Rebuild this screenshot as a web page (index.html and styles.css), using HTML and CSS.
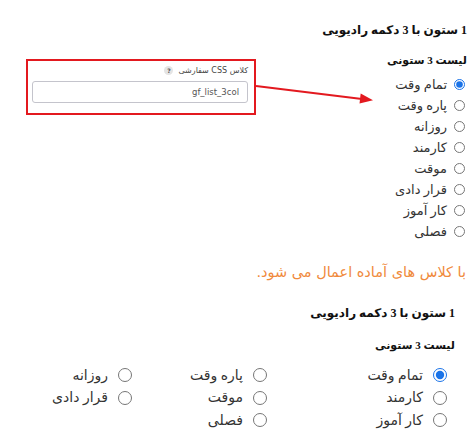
FILE: index.html
```html
<!DOCTYPE html>
<html lang="fa" dir="rtl">
<head>
<meta charset="utf-8">
<title>لیست 3 ستونی</title>
<link rel="stylesheet" href="styles.css">
</head>
<body>
<main class="page">
  <section class="demo">
    <div class="field field-top">
      <h2 class="field-title">1 ستون با 3 دکمه رادیویی</h2>
      <h3 class="list-title">لیست 3 ستونی</h3>
      <ul class="radios radios-single">
        <li><input type="radio" name="a" checked><span>تمام وقت</span></li>
        <li><input type="radio" name="a"><span>پاره وقت</span></li>
        <li><input type="radio" name="a"><span>روزانه</span></li>
        <li><input type="radio" name="a"><span>کارمند</span></li>
        <li><input type="radio" name="a"><span>موقت</span></li>
        <li><input type="radio" name="a"><span>قرار دادی</span></li>
        <li><input type="radio" name="a"><span>کار آموز</span></li>
        <li><input type="radio" name="a"><span>فصلی</span></li>
      </ul>
    </div>
    <div class="settings">
      <div class="label-row"><span>کلاس CSS سفارشی</span><span class="help">?</span></div>
      <div class="input" dir="ltr">gf_list_3col</div>
    </div>
    <svg class="arrow" width="474" height="240" viewBox="0 0 474 240" aria-hidden="true">
      <line x1="256" y1="86" x2="362" y2="99" stroke="#e3191f" stroke-width="2"/>
      <polygon points="373,100.3 360.7,93.6 359.5,103.5" fill="#e3191f"/>
    </svg>
  </section>

  <p class="note">با کلاس های آماده اعمال می شود.</p>

  <section class="field field-bottom">
    <h2 class="field-title">1 ستون با 3 دکمه رادیویی</h2>
    <h3 class="list-title">لیست 3 ستونی</h3>
    <ul class="radios radios-grid">
      <li><input type="radio" name="b" checked><span>تمام وقت</span></li>
      <li><input type="radio" name="b"><span>پاره وقت</span></li>
      <li><input type="radio" name="b"><span>روزانه</span></li>
      <li><input type="radio" name="b"><span>کارمند</span></li>
      <li><input type="radio" name="b"><span>موقت</span></li>
      <li><input type="radio" name="b"><span>قرار دادی</span></li>
      <li><input type="radio" name="b"><span>کار آموز</span></li>
      <li><input type="radio" name="b"><span>فصلی</span></li>
    </ul>
  </section>
</main>
</body>
</html>
```
FILE: styles.css
```css
* { box-sizing: border-box; }

html, body {
  margin: 0;
  background: #fff;
}

body {
  width: 474px;
  height: 439px;
  overflow: hidden;
  direction: rtl;
  font-family: "DejaVu Sans", "Noto Sans", sans-serif;
  color: #1a1a1a;
}

.page {
  display: flex;
  flex-direction: column;
}

.demo {
  position: relative;
  display: flex;
  justify-content: space-between;
  align-items: flex-start;
  padding: 20px 7px 0 0;
}

.field-title,
.list-title {
  margin: 0;
  font-family: "Liberation Serif", "DejaVu Sans", serif;
  font-size: 11px;
  font-weight: bold;
  line-height: 20px;
  color: #111;
}

.field-title {
  font-size: 12px;
}

.list-title {
  margin-top: 10px;
}

.radios {
  list-style: none;
  margin: 4px 0 0;
  padding: 0;
}

.radios li {
  display: flex;
  align-items: center;
  font-family: "Liberation Serif", "DejaVu Sans", serif;
  color: #333;
}

.radios input {
  margin: 0;
  accent-color: #1a73e8;
}

.radios-single {
  padding-right: 2px;
}

.radios-single li {
  height: 21px;
  gap: 7px;
  font-size: 13px;
}

.radios-single input {
  width: 11px;
  height: 11px;
}

.settings {
  margin: 39px 0 0 26px;
  width: 230px;
  border: 2px solid #e3191f;
  padding: 2px 6px 10px 4px;
}

.label-row {
  display: flex;
  align-items: center;
  gap: 5px;
  height: 14px;
  margin-bottom: 4px;
  font-size: 8px;
  color: #444;
}

.help {
  display: inline-flex;
  align-items: center;
  justify-content: center;
  width: 9px;
  height: 9px;
  border-radius: 50%;
  background: #e4e4e4;
  color: #555;
  font-size: 6px;
  font-weight: bold;
}

.input {
  height: 22px;
  border: 1px solid #c4c4cc;
  border-radius: 3px;
  display: flex;
  align-items: center;
  justify-content: flex-end;
  padding: 0 8px;
  font-size: 8.5px;
  color: #555;
}

.arrow {
  position: absolute;
  left: 0;
  top: 0;
  pointer-events: none;
}

.note {
  margin: 18px 8px 0 0;
  font-size: 14.5px;
  line-height: 24px;
  color: #f08a3c;
}

.field-bottom {
  margin-top: 19px;
  padding-right: 19px;
}

.field-bottom .list-title {
  margin-top: 12px;
}

.radios-grid {
  display: grid;
  grid-template-columns: 180px 135px 1fr;
  margin: 9px 8px 0 0;
}

.radios-grid li {
  height: 22.5px;
  gap: 10px;
  font-size: 14px;
}

.radios-grid input {
  width: 14px;
  height: 14px;
}
```
